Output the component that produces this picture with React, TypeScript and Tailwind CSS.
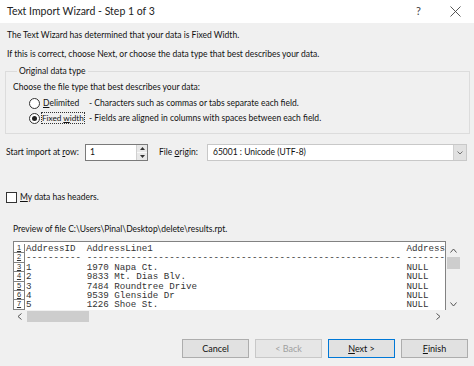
import React from "react";

const pad = (s: string, n: number) => s.padEnd(n, " ");

const rows: string[] = [
  pad("AddressID", 11) + pad("AddressLine1", 58) + "AddressLine2",
  "-".repeat(10) + " " + "-".repeat(57) + " " + "-".repeat(12),
  pad("1", 11) + pad("1970 Napa Ct.", 58) + "NULL",
  pad("2", 11) + pad("9833 Mt. Dias Blv.", 58) + "NULL",
  pad("3", 11) + pad("7484 Roundtree Drive", 58) + "NULL",
  pad("4", 11) + pad("9539 Glenside Dr", 58) + "NULL",
  pad("5", 11) + pad("1226 Shoe St.", 58) + "NULL",
];

function Radio({ checked }: { checked?: boolean }) {
  return (
    <span className="w-[11px] h-[11px] shrink-0 rounded-full border border-[#333] bg-white flex items-center justify-center">
      {checked && <span className="w-[5px] h-[5px] rounded-full bg-[#222]" />}
    </span>
  );
}

function Btn({
  children,
  disabled,
  focused,
}: {
  children: React.ReactNode;
  disabled?: boolean;
  focused?: boolean;
}) {
  return (
    <div
      className={
        "w-[67px] h-[19px] flex items-center justify-center text-[9px] bg-[#e1e1e1] border " +
        (focused ? "border-[#0078d7]" : "border-[#adadad]") +
        (disabled ? " text-[#a0a0a0] bg-[#e6e6e6] border-[#c8c8c8]" : " text-[#111]")
      }
    >
      {children}
    </div>
  );
}

export default function App() {
  return (
    <div className="w-[474px] h-[366px] bg-[#f0f0f0] overflow-hidden flex flex-col font-['Lato',sans-serif] text-[#111]">
      {/* title bar */}
      <div className="h-[23px] bg-white flex items-center pl-[7px] shrink-0">
        <span className="text-[10.5px] text-[#222]">Text Import Wizard - Step 1 of 3</span>
        <span className="ml-auto mr-[29px] text-[11px] text-[#444]">?</span>
        <svg width="11" height="11" viewBox="0 0 11 11" className="mr-[13px]">
          <path d="M0.5 0.5 L10.5 10.5 M10.5 0.5 L0.5 10.5" stroke="#444" strokeWidth="0.9" />
        </svg>
      </div>

      <div className="pl-[7px] mt-[6px] text-[8.5px] leading-[12px]">
        The Text Wizard has determined that your data is Fixed Width.
      </div>
      <div className="pl-[7px] mt-[7px] text-[8.5px] leading-[12px]">
        If this is correct, choose Next, or choose the data type that best describes your data.
      </div>

      <fieldset className="ml-[5px] mr-[4px] mt-[5px] border border-[#dcdcdc] pl-[7px] pb-[8px] text-[8.5px]">
        <legend className="ml-[4px] px-[2px] leading-[12px]">Original data type</legend>
        <div className="mt-[4px] leading-[12px]">Choose the file type that best describes your data:</div>
        <div className="mt-[3px] flex flex-col gap-[1px] pl-[16px] whitespace-nowrap">
          <div className="h-[14px] flex items-center">
            <Radio />
            <span className="w-[49px] shrink-0 pl-[3px]">
              <span className="underline">D</span>elimited
            </span>
            <span>- Characters such as commas or tabs separate each field.</span>
          </div>
          <div className="h-[14px] flex items-center">
            <Radio checked />
            <span className="w-[49px] shrink-0 pl-[1px]">
              <span className="border border-dotted border-[#333] text-[8.2px]">
                Fixed <span className="underline">w</span>idth
              </span>
            </span>
            <span>- Fields are aligned in columns with spaces between each field.</span>
          </div>
        </div>
      </fieldset>

      {/* start import row */}
      <div className="mt-[10px] flex items-center h-[17px] pl-[6px] text-[8.5px] whitespace-nowrap">
        <span className="w-[79px] shrink-0">
          Start import at <span className="underline">r</span>ow:
        </span>
        <div className="h-[17px] w-[63px] shrink-0 bg-white border border-[#7a7a7a] flex">
          <span className="flex-1 pl-[4px] leading-[15px]">1</span>
          <div className="w-[11px] flex flex-col border-l border-[#d0d0d0]">
            <div className="flex-1 bg-[#e8e8e8] flex items-center justify-center border-b border-[#f8f8f8]">
              <svg width="5" height="3" viewBox="0 0 5 3"><path d="M0 3 L2.5 0 L5 3 Z" fill="#333" /></svg>
            </div>
            <div className="flex-1 bg-[#e8e8e8] flex items-center justify-center">
              <svg width="5" height="3" viewBox="0 0 5 3"><path d="M0 0 L2.5 3 L5 0 Z" fill="#333" /></svg>
            </div>
          </div>
        </div>
        <span className="ml-[11px] w-[48px] shrink-0">
          File <span className="underline">o</span>rigin:
        </span>
        <div className="h-[17px] w-[260px] shrink-0 bg-white border border-[#c8c8c8] flex">
          <span className="flex-1 pl-[5px] leading-[15px]">65001 : Unicode (UTF-8)</span>
          <div className="w-[13px] bg-[#e1e1e1] border-l border-[#d0d0d0] flex items-center justify-center">
            <svg width="6" height="4" viewBox="0 0 6 4"><path d="M0.5 0.5 L3 3 L5.5 0.5" stroke="#666" strokeWidth="0.9" fill="none" /></svg>
          </div>
        </div>
      </div>

      {/* checkbox */}
      <div className="mt-[30px] flex items-center h-[12px] pl-[6px] text-[8.5px]">
        <span className="w-[11px] h-[11px] border border-[#333] bg-white" />
        <span className="ml-[3px]">
          <span className="underline">M</span>y data has headers.
        </span>
      </div>

      <div className="mt-[20px] pl-[13px] text-[8.5px] leading-[12px]">
        Preview of file C:\Users\Pinal\Desktop\delete\results.rpt.
      </div>

      {/* preview */}
      <div className="mt-[6px] ml-[13px] w-[448px] flex flex-col">
        <div className="flex h-[69px]">
          <div className="w-[433px] bg-white border-l border-t border-r border-[#828282] overflow-hidden pt-[2px]">
            {rows.map((r, i) => (
              <div key={i} className="flex h-[9.4px] items-stretch overflow-hidden">
                <span className="w-[11px] shrink-0 border-r border-b border-[#828282] text-[7.5px] leading-[8px] text-center font-['Liberation_Sans',sans-serif] text-[#333] underline">
                  {i + 1}
                </span>
                <pre className="pl-[1px] h-[9.4px] font-['Liberation_Mono',monospace] text-[9.2px] leading-[9.4px] text-[#333] whitespace-pre">
                  {r}
                </pre>
              </div>
            ))}
          </div>
          <div className="w-[15px] flex flex-col items-center">
            <svg width="7" height="5" viewBox="0 0 7 5" className="mt-[7px]">
              <path d="M0.5 4.5 L3.5 1 L6.5 4.5" stroke="#555" strokeWidth="1" fill="none" />
            </svg>
            <div className="mt-[4px] w-[13px] h-[12px] bg-[#cdcdcd]" />
            <svg width="7" height="5" viewBox="0 0 7 5" className="mt-auto mb-[3px]">
              <path d="M0.5 0.5 L3.5 4 L6.5 0.5" stroke="#555" strokeWidth="1" fill="none" />
            </svg>
          </div>
        </div>
        <div className="h-[13px] w-[433px] flex items-center">
          <svg width="5" height="7" viewBox="0 0 5 7" className="ml-[4px]">
            <path d="M4.5 0.5 L1 3.5 L4.5 6.5" stroke="#555" strokeWidth="1" fill="none" />
          </svg>
          <div className="ml-[5px] w-[62px] h-[11px] bg-[#cdcdcd]" />
          <svg width="5" height="7" viewBox="0 0 5 7" className="ml-auto mr-[5px]">
            <path d="M0.5 0.5 L4 3.5 L0.5 6.5" stroke="#555" strokeWidth="1" fill="none" />
          </svg>
        </div>
      </div>

      {/* buttons */}
      <div className="mt-[16px] flex justify-end gap-[6px] pr-[6px]">
        <Btn>Cancel</Btn>
        <Btn disabled>&lt; Back</Btn>
        <Btn focused>
          <span>
            <span className="underline">N</span>ext &gt;
          </span>
        </Btn>
        <Btn>
          <span>
            <span className="underline">F</span>inish
          </span>
        </Btn>
      </div>
    </div>
  );
}
